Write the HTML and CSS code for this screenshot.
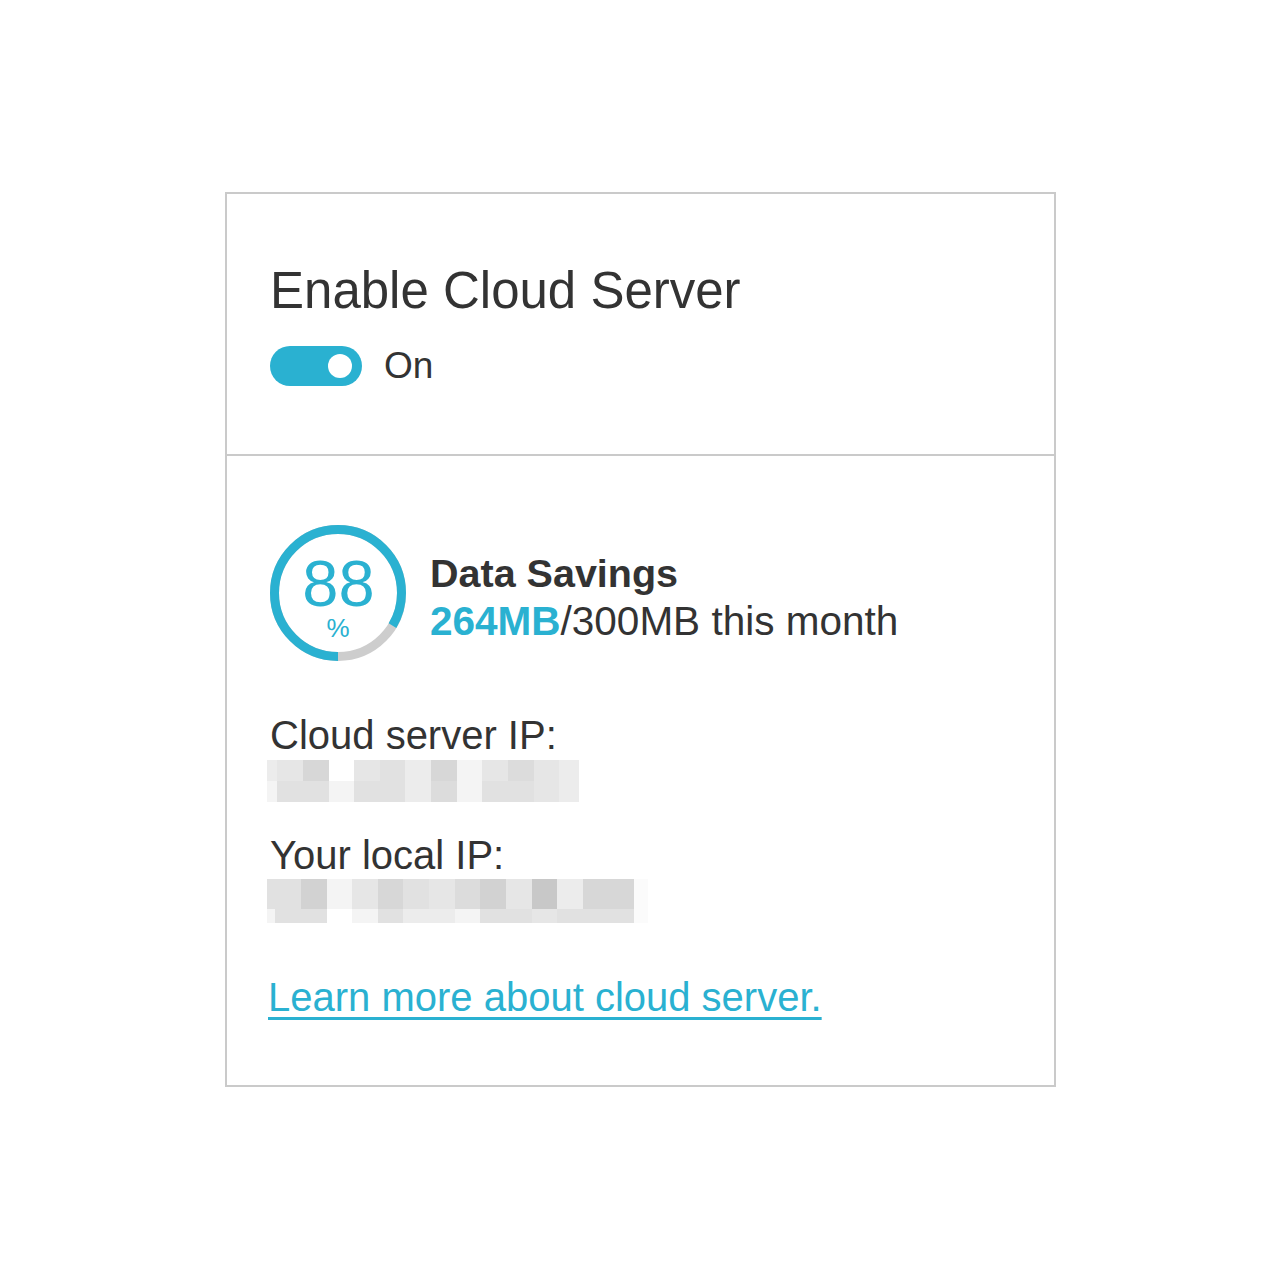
FILE: index.html
```html
<!DOCTYPE html>
<html lang="en">
<head>
<meta charset="utf-8">
<title>Enable Cloud Server</title>
<link rel="stylesheet" href="styles.css">
</head>
<body>
<div class="card">
  <section class="sec sec-top">
    <h1 class="title">Enable Cloud Server</h1>
    <div class="toggle-row">
      <span class="toggle"><span class="knob"></span></span>
      <span class="toggle-label">On</span>
    </div>
  </section>
  <section class="sec sec-body">
    <div class="savings">
      <div class="gauge">
        <svg class="gauge-svg" width="136" height="136" viewBox="0 0 136 136">
          <circle cx="68" cy="68" r="63.5" fill="none" stroke="#cdcdcd" stroke-width="9"/>
          <circle cx="68" cy="68" r="63.5" fill="none" stroke="#2ab1d1" stroke-width="9"
                  stroke-dasharray="333 399" transform="rotate(90 68 68)"/>
        </svg>
        <div class="gauge-label">
          <div class="gauge-num">88</div>
          <div class="gauge-pct">%</div>
        </div>
      </div>
      <div class="savings-text">
        <div class="savings-title">Data Savings</div>
        <div class="savings-val"><span class="hl">264MB</span>/300MB this month</div>
      </div>
    </div>

    <div class="label label-first">Cloud server IP:</div>
    <div class="pix pix-a">
      <div class="pix-row r1">
        <span class="c w10 g2"></span><span class="c w26 g3"></span><span class="c w26 g6"></span><span class="c w25 g0"></span><span class="c w26 g3"></span><span class="c w25 g4"></span><span class="c w26 g2"></span><span class="c w26 g6"></span><span class="c w25 g1"></span><span class="c w26 g3"></span><span class="c w26 g5"></span><span class="c w25 g3"></span><span class="c w20 g2"></span>
      </div>
      <div class="pix-row r2">
        <span class="c w10 g1"></span><span class="c w26 g4"></span><span class="c w26 g4"></span><span class="c w25 g1"></span><span class="c w26 g4"></span><span class="c w25 g4"></span><span class="c w26 g2"></span><span class="c w26 g5"></span><span class="c w25 g1"></span><span class="c w26 g4"></span><span class="c w26 g4"></span><span class="c w25 g3"></span><span class="c w20 g2"></span>
      </div>
    </div>

    <div class="label">Your local IP:</div>
    <div class="pix pix-b">
      <div class="pix-row r3">
        <span class="c w34 g4"></span><span class="c w26 g7"></span><span class="c w25 g1"></span><span class="c w26 g3"></span><span class="c w25 g6"></span><span class="c w26 g4"></span><span class="c w26 g3"></span><span class="c w25 g5"></span><span class="c w26 g7"></span><span class="c w26 g3"></span><span class="c w25 g8"></span><span class="c w26 g2"></span><span class="c w25 g6"></span><span class="c w26 g6"></span><span class="c w14 g0b"></span>
      </div>
      <div class="pix-row r4">
        <span class="c w8 g1"></span><span class="c w52 g4"></span><span class="c w25 g0"></span><span class="c w26 g1"></span><span class="c w25 g4"></span><span class="c w26 g2"></span><span class="c w26 g2"></span><span class="c w25 g1"></span><span class="c w26 g4"></span><span class="c w26 g4"></span><span class="c w25 g3"></span><span class="c w26 g4"></span><span class="c w25 g4"></span><span class="c w26 g4"></span><span class="c w14 g0b"></span>
      </div>
    </div>

    <a class="learn" href="#">Learn more about cloud server.</a>
  </section>
</div>
</body>
</html>
```

FILE: styles.css
```css
* { box-sizing: border-box; }

html, body {
  margin: 0;
  padding: 0;
  background: #ffffff;
}

body {
  font-family: "Liberation Sans", Arial, sans-serif;
  color: #333333;
  padding-top: 192px;
  padding-left: 225px;
}

.card {
  width: 831px;
  border: 2px solid #cacaca;
  background: #ffffff;
}

.sec {
  padding-left: 43px;
  padding-right: 43px;
}

.sec-top {
  padding-top: 69px;
  padding-bottom: 68px;
  border-bottom: 2px solid #cacaca;
}

.title {
  margin: 0;
  font-size: 51px;
  line-height: 56px;
  font-weight: 400;
  color: #333333;
}

.toggle-row {
  display: flex;
  align-items: center;
  margin-top: 27px;
  height: 40px;
}

.toggle {
  position: relative;
  display: block;
  width: 92px;
  height: 40px;
  border-radius: 20px;
  background: #2ab1d1;
}

.knob {
  position: absolute;
  right: 10px;
  top: 8px;
  width: 24px;
  height: 24px;
  border-radius: 50%;
  background: #ffffff;
}

.toggle-label {
  margin-left: 22px;
  font-size: 37px;
  line-height: 40px;
  color: #333333;
}

.sec-body {
  padding-top: 69px;
  padding-bottom: 64px;
}

.savings {
  display: flex;
  align-items: flex-start;
}

.gauge {
  position: relative;
  width: 136px;
  height: 136px;
  flex: none;
}

.gauge-svg {
  display: block;
}

.gauge-label {
  position: absolute;
  left: 0;
  top: 31px;
  width: 136px;
  text-align: center;
  color: #2ab1d1;
  font-family: "Liberation Sans", Arial, sans-serif;
  font-weight: 400;
}

.gauge-num {
  font-size: 65px;
  line-height: 56px;
  padding-left: 1px;
}

.gauge-pct {
  font-size: 26px;
  line-height: 26px;
  margin-top: 3px;
}

.savings-text {
  margin-left: 24px;
  margin-top: 24px;
  line-height: 48px;
  color: #333333;
}

.savings-title {
  font-size: 39.5px;
  font-weight: 700;
}

.savings-val {
  font-size: 40.5px;
}

.hl {
  color: #2ab1d1;
  font-weight: 700;
}

.label {
  font-size: 40px;
  line-height: 48px;
  color: #333333;
  margin-top: 29px;
}

.label-first {
  margin-top: 50px;
}

.pix {
  margin-left: -3px;
  display: flex;
  flex-direction: column;
}

.pix-a {
  margin-top: 1px;
  height: 42px;
}

.pix-b {
  margin-top: 0;
  height: 44px;
}

.pix-row {
  display: flex;
}

.r1 { height: 21px; }
.r2 { height: 21px; }
.r3 { height: 30px; }
.r4 { height: 14px; }

.c { display: block; height: 100%; }

.w8  { width: 8px; }
.w10 { width: 10px; }
.w14 { width: 14px; }
.w20 { width: 20px; }
.w25 { width: 25px; }
.w26 { width: 26px; }
.w34 { width: 34px; }
.w52 { width: 52px; }

.g0  { background: #ffffff; }
.g0b { background: #fbfbfb; }
.g1  { background: #f4f4f4; }
.g2  { background: #ececec; }
.g3  { background: #e6e6e6; }
.g4  { background: #e1e1e1; }
.g5  { background: #dcdcdc; }
.g6  { background: #d7d7d7; }
.g7  { background: #d2d2d2; }
.g8  { background: #c8c8c8; }

.learn {
  display: inline-block;
  margin-top: 50px;
  margin-left: -2px;
  font-size: 40px;
  line-height: 48px;
  color: #2ab1d1;
  text-decoration: underline;
  text-decoration-thickness: 3px;
  text-underline-offset: 6px;
}
```
